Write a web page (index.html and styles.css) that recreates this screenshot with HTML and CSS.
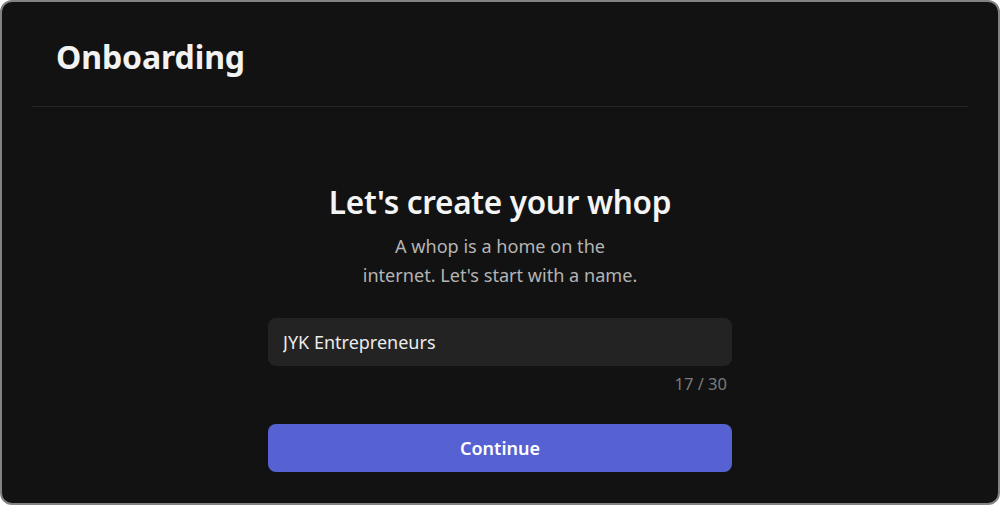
FILE: index.html
```html
<!DOCTYPE html>
<html lang="en">
<head>
<meta charset="utf-8">
<title>Onboarding</title>
<link rel="stylesheet" href="styles.css">
</head>
<body>
<div class="panel">
  <header class="header">
    <h1 class="header-title">Onboarding</h1>
  </header>
  <main class="content">
    <h2 class="title">Let's create your whop</h2>
    <p class="subtitle">A whop is a home on the internet. Let's start with a name.</p>
    <div class="field">
      <input class="name-input" type="text" value="JYK Entrepreneurs" maxlength="30">
      <div class="counter">17 / 30</div>
    </div>
    <button class="continue" type="button">Continue</button>
  </main>
</div>
</body>
</html>
```

FILE: styles.css
```css
* { box-sizing: border-box; }
html, body {
  margin: 0;
  padding: 0;
  background: #ffffff;
}
body {
  font-family: "Noto Sans", "Open Sans", "Liberation Sans", sans-serif;
  width: 1000px;
  height: 505px;
}
.panel {
  width: 1000px;
  height: 505px;
  background: #121212;
  border: 2px solid #838383;
  border-radius: 12px;
  overflow: hidden;
  display: flex;
  flex-direction: column;
}
.header {
  margin: 0 30px;
  padding: 0 24px;
  height: 105px;
  border-bottom: 1px solid #262626;
  display: flex;
  align-items: center;
}
.header-title {
  margin: 0;
  padding-top: 4px;
  font-size: 32px;
  font-weight: 700;
  color: #f2f2f2;
  letter-spacing: -0.1px;
}
.content {
  display: flex;
  flex-direction: column;
  align-items: center;
  padding-top: 75px;
}
.title {
  margin: 0;
  font-size: 31.5px;
  line-height: 40px;
  font-weight: 600;
  color: #f4f4f4;
  letter-spacing: -0.3px;
}
.subtitle {
  margin: 10px 0 0;
  width: 285px;
  text-align: center;
  font-size: 18.1px;
  line-height: 29px;
  color: #b4b4b4;
}
.field {
  margin-top: 28px;
  width: 464px;
  display: flex;
  flex-direction: column;
}
.name-input {
  width: 100%;
  height: 48px;
  border: none;
  outline: none;
  border-radius: 8px;
  background: #232323;
  color: #ececec;
  font-family: inherit;
  font-size: 18px;
  padding: 0 15px;
}
.counter {
  margin-top: 8px;
  padding-right: 5px;
  text-align: right;
  font-size: 16.5px;
  line-height: 20px;
  color: #7a7a7a;
}
.continue {
  margin-top: 30px;
  width: 464px;
  height: 48px;
  border: none;
  border-radius: 8px;
  background: #5662d2;
  color: #ffffff;
  font-family: inherit;
  font-size: 18px;
  font-weight: 600;
  cursor: pointer;
}
```
